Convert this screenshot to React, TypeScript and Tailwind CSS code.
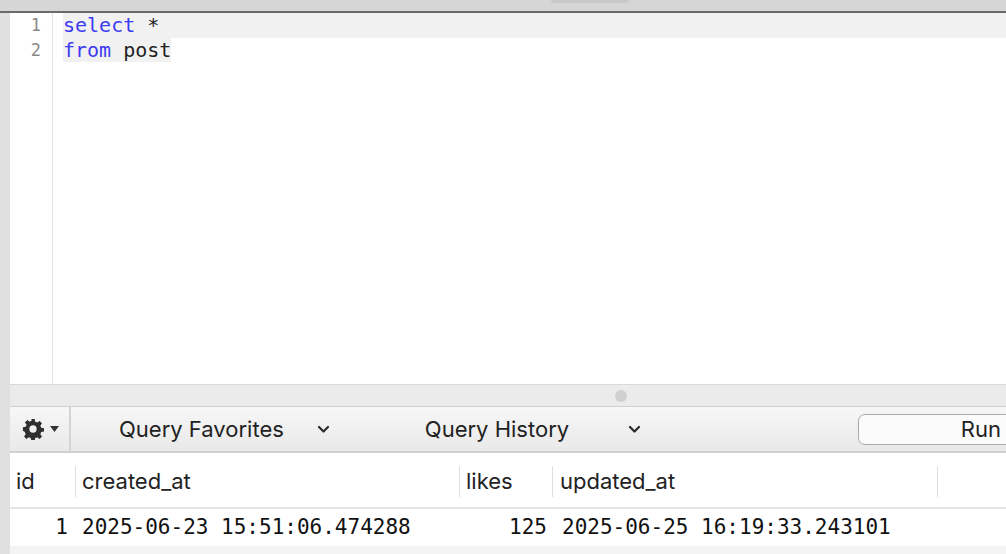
import React from 'react'

const mono = { fontFamily: '"DejaVu Sans Mono", "Liberation Mono", monospace' }

const Gear = () => (
  <svg width="22" height="22" viewBox="0 0 24 24" fill="#2f2f2f">
    <path
      fillRule="evenodd"
      d="M10.2 1h3.6l.6 3.1a8 8 0 0 1 2.2.9l2.6-1.8 2.6 2.6-1.8 2.6a8 8 0 0 1 .9 2.2l3.1.6v3.6l-3.1.6a8 8 0 0 1-.9 2.2l1.8 2.6-2.6 2.6-2.6-1.8a8 8 0 0 1-2.2.9l-.6 3.1h-3.6l-.6-3.1a8 8 0 0 1-2.2-.9l-2.6 1.8-2.6-2.6 1.8-2.6a8 8 0 0 1-.9-2.2L1 13.8v-3.6l3.1-.6a8 8 0 0 1 .9-2.2L3.2 4.8l2.6-2.6 2.6 1.8a8 8 0 0 1 2.2-.9zM12 8a4 4 0 1 0 0 8 4 4 0 0 0 0-8z"
    />
  </svg>
)

const Chevron = () => (
  <svg width="13" height="9" viewBox="0 0 13 9" fill="none">
    <path d="M2 2l4.5 4.5L11 2" stroke="#2a2a2a" strokeWidth="2.2" strokeLinecap="round" strokeLinejoin="round" />
  </svg>
)

const App = () => {
  return (
    <div
      className="w-[1006px] h-[554px] flex flex-col overflow-hidden bg-white text-[#222]"
      style={{ fontFamily: 'Inter, "Liberation Sans", sans-serif' }}
    >
      {/* tab strip (cut off) */}
      <div className="h-[13px] shrink-0 bg-[#d6d6d6] border-b-2 border-[#6a6a6a] flex">
        <div className="ml-[551px] w-[78px] h-[3px] rounded-b-md bg-[#c9c9c9]" />
      </div>

      <div className="flex flex-1 min-h-0">
        {/* sidebar edge */}
        <div className="w-[10px] shrink-0 bg-[#e0e0e0]" />

        <div className="flex-1 flex flex-col min-w-0">
          {/* editor */}
          <div className="h-[371px] shrink-0 flex" style={mono}>
            <div className="w-[43px] shrink-0 border-r border-[#e2e2e2] bg-white text-right pr-[11px] text-[17px] leading-[25px] text-[#8a8a8a]">
              <div>1</div>
              <div>2</div>
            </div>
            <div className="flex-1 pl-[10px] text-[20px] leading-[25px]">
              <div className="bg-[#f1f1f1] whitespace-pre">
                <span className="text-[#3c3cf2]">select</span> *
              </div>
              <div className="whitespace-pre">
                <span className="bg-[#f1f1f1]">
                  <span className="text-[#3c3cf2]">from</span> post
                </span>
              </div>
            </div>
          </div>

          {/* splitter */}
          <div className="h-[23px] shrink-0 bg-[#ebebeb] border-t border-[#dadada] border-b border-b-[#cfcfcf] flex items-center">
            <div className="ml-[605px] w-[12px] h-[12px] rounded-full bg-[#d0d0d0]" />
          </div>

          {/* toolbar */}
          <div className="h-[46px] shrink-0 flex items-center border-b-2 border-[#d0d0d0] bg-gradient-to-b from-[#f7f7f7] to-[#e9e9e9] text-[22px]">
            <div className="w-[61px] h-full shrink-0 flex items-center pl-[12px] gap-[6px] border-r-2 border-[#d4d4d4]">
              <Gear />
              <svg width="9" height="6" viewBox="0 0 9 6">
                <path d="M0 0h9L4.5 6z" fill="#333" />
              </svg>
            </div>
            <div className="flex items-center ml-[48px]">
              <span>Query Favorites</span>
              <span className="ml-[33px]">
                <Chevron />
              </span>
            </div>
            <div className="flex items-center ml-[95px]">
              <span>Query History</span>
              <span className="ml-[59px]">
                <Chevron />
              </span>
            </div>
            <div className="ml-auto -mr-[10px] w-[158px] h-[31px] shrink-0 rounded-[7px] border border-[#a9a9a9] bg-[#fbfbfb] flex items-center justify-end pr-[14px]">
              Run
            </div>
          </div>

          {/* result header */}
          <div className="h-[56px] shrink-0 flex items-center border-b-2 border-[#e4e4e4] text-[22px] pt-[3px]">
            <div className="w-[65px] shrink-0 pl-[6px]">id</div>
            <div className="w-px h-[31px] bg-[#dedede]" />
            <div className="w-[383px] shrink-0 pl-[6px]">created_at</div>
            <div className="w-px h-[31px] bg-[#dedede]" />
            <div className="w-[92px] shrink-0 pl-[6px]">likes</div>
            <div className="w-px h-[31px] bg-[#dedede]" />
            <div className="w-[384px] shrink-0 pl-[7px]">updated_at</div>
            <div className="w-px h-[31px] bg-[#dedede]" />
          </div>

          {/* result rows */}
          <div className="h-[37px] shrink-0 flex items-center text-[21px] text-[#111]" style={mono}>
            <div className="w-[58px] shrink-0 text-right">1</div>
            <div className="w-[14px] shrink-0" />
            <div className="w-[383px] shrink-0 whitespace-pre">2025-06-23 15:51:06.474288</div>
            <div className="w-[82px] shrink-0 text-right">125</div>
            <div className="w-[15px] shrink-0" />
            <div className="whitespace-pre">2025-06-25 16:19:33.243101</div>
          </div>
          <div className="flex-1 bg-[#f4f4f4]" />
        </div>
      </div>
    </div>
  )
}

export default App
